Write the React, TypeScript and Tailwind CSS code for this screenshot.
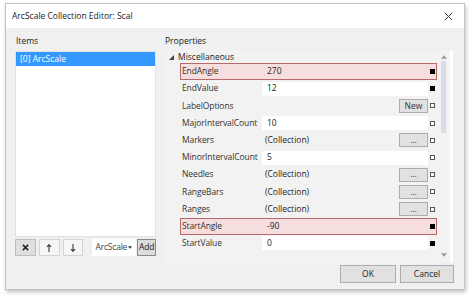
import React from "react";

type Row = {
  name: string;
  value: string;
  editable: boolean;
  button?: string;
  set: boolean;
  hot?: boolean;
};

const rows: Row[] = [
  { name: "EndAngle", value: "270", editable: true, set: true, hot: true },
  { name: "EndValue", value: "12", editable: true, set: true },
  { name: "LabelOptions", value: "", editable: false, button: "New", set: false },
  { name: "MajorIntervalCount", value: "10", editable: true, set: false },
  { name: "Markers", value: "(Collection)", editable: false, button: "...", set: false },
  { name: "MinorIntervalCount", value: "5", editable: true, set: false },
  { name: "Needles", value: "(Collection)", editable: false, button: "...", set: false },
  { name: "RangeBars", value: "(Collection)", editable: false, button: "...", set: false },
  { name: "Ranges", value: "(Collection)", editable: false, button: "...", set: false },
  { name: "StartAngle", value: "-90", editable: true, set: true, hot: true },
  { name: "StartValue", value: "0", editable: true, set: true },
];

const font = { fontFamily: '"Open Sans", "Noto Sans", sans-serif' };

const PropRow = ({ row }: { row: Row }) => {
  return (
    <div className="h-[17.2px] flex items-center">
      <div
        className={
          "flex items-center h-full w-[257px] " +
          (row.hot ? "bg-[#f6dede] border border-[#b86a6a]" : "border border-transparent")
        }
      >
        <div className="w-[81px] pl-[1px] whitespace-nowrap tracking-[-0.1px] text-[#333]">{row.name}</div>
        <div className="w-[166px] h-full flex items-center">
          {row.editable ? (
            <div
              className={
                "h-[14px] flex-1 flex items-center pl-[5px] " +
                (row.hot ? "" : "bg-white")
              }
            >
              {row.value}
            </div>
          ) : (
            <div className="flex-1 flex items-center justify-between">
              <span className="pl-[3px]">{row.value}</span>
              {row.button && (
                <span className="h-[14px] w-[29px] flex items-center justify-center border border-[#adadad] bg-[#e1e1e1] leading-none text-[#333]">
                  {row.button}
                </span>
              )}
            </div>
          )}
        </div>
        <div className="flex-1 flex justify-center">
          <div
            className={
              "w-[5px] h-[5px] border " +
              (row.set ? "bg-black border-black" : "bg-white border-[#555]")
            }
          />
        </div>
      </div>
    </div>
  );
};

const SmallBtn = ({ children, w }: { children: React.ReactNode; w: string }) => (
  <div className={"h-[17px] flex items-center justify-center border " + w}>{children}</div>
);

export default function App() {
  return (
    <div className="w-[474px] h-[301px] bg-white text-[8.5px] text-[#222] overflow-hidden" style={font}>
      <div className="ml-[5px] mt-[3px] w-[460px] h-[287px] border border-[#c4c4c4] bg-[#f0f0f0] shadow-[1px_2px_4px_rgba(0,0,0,0.25)] flex flex-col">
        <div className="h-[24px] bg-white flex items-center justify-between pl-[6px] pr-[11px]">
          <span>ArcScale Collection Editor: Scal</span>
          <svg width="9" height="9" viewBox="0 0 10 10">
            <path d="M1 1 L9 9 M9 1 L1 9" stroke="#333" strokeWidth="1.1" />
          </svg>
        </div>
        <div className="flex flex-1 pl-[9px] pt-[7px]">
          <div className="w-[141px] flex flex-col">
            <div className="h-[16px] pl-[1px]">Items</div>
            <div className="h-[186px] bg-white border border-[#e2e2e2]">
              <div className="h-[14px] bg-[#3399ff] text-white flex items-center pl-[4px]">[0] ArcScale</div>
            </div>
            <div className="flex items-center mt-[2px] gap-[3px]">
              <SmallBtn w="w-[21px] bg-[#dedede] border-[#bdbdbd]">
                <svg width="7" height="7" viewBox="0 0 8 8">
                  <path d="M1 1 L7 7 M7 1 L1 7" stroke="#222" strokeWidth="1.8" />
                </svg>
              </SmallBtn>
              <SmallBtn w="w-[21px] bg-[#f6f6f6] border-[#d4d4d4]">
                <svg width="6" height="8" viewBox="0 0 6 9">
                  <path d="M3 1 L3 9 M0.8 3.2 L3 0.8 L5.2 3.2" stroke="#333" strokeWidth="1.2" fill="none" />
                </svg>
              </SmallBtn>
              <SmallBtn w="w-[21px] bg-[#f6f6f6] border-[#d4d4d4]">
                <svg width="6" height="8" viewBox="0 0 6 9">
                  <path d="M3 0 L3 8 M0.8 5.8 L3 8.2 L5.2 5.8" stroke="#333" strokeWidth="1.2" fill="none" />
                </svg>
              </SmallBtn>
              <div className="ml-[6px] h-[17px] w-[44px] bg-white flex items-center pl-[3px] text-[#444] tracking-[-0.2px] whitespace-nowrap">
                ArcScale
                <svg width="4" height="3" viewBox="0 0 5 3" className="ml-[1px]">
                  <path d="M0 0 L5 0 L2.5 3 Z" fill="#333" />
                </svg>
              </div>
              <div className="h-[17px] w-[19px] -ml-[2px] flex items-center justify-center border border-[#8a8a8a] bg-[#dcdcdc] tracking-[-0.2px]">
                Add
              </div>
            </div>
          </div>
          <div className="ml-[9px] w-[288px] flex flex-col">
            <div className="h-[16px]">Properties</div>
            <div className="h-[212px] bg-white flex">
              <div className="flex flex-col bg-[#f2f2f2] border-l-[15px] border-[#f2f2f2]">
                <div className="h-[12px] flex items-center -ml-[11px]">
                  <svg width="5" height="5" viewBox="0 0 6 6" className="mr-[4px]">
                    <path d="M6 0 L6 6 L0 6 Z" fill="#444" />
                  </svg>
                  <span>Miscellaneous</span>
                </div>
                {rows.map((r) => (
                  <PropRow key={r.name} row={r} />
                ))}
              </div>
              <div className="w-[13px] bg-[#f2f2f2] flex flex-col items-center pt-[4px] pb-[6px]">
                <svg width="6" height="4" viewBox="0 0 7 4">
                  <path d="M0 4 L3.5 0 L7 4 Z" fill="#999" />
                </svg>
                <div className="w-[5px] flex-1 mt-[2px] flex flex-col">
                  <div className="h-[72px] bg-[#dcdce8]" />
                </div>
                <svg width="6" height="4" viewBox="0 0 7 4">
                  <path d="M0 0 L7 0 L3.5 4 Z" fill="#999" />
                </svg>
              </div>
              <div className="flex-1 bg-white" />
            </div>
          </div>
        </div>
        <div className="flex justify-end gap-[4px] pr-[10px] pb-[6px]">
          <div className="w-[56px] h-[18px] border border-[#adadad] bg-[#e1e1e1] flex items-center justify-center">OK</div>
          <div className="w-[54px] h-[18px] border border-[#adadad] bg-[#e1e1e1] flex items-center justify-center">Cancel</div>
        </div>
      </div>
    </div>
  );
}
